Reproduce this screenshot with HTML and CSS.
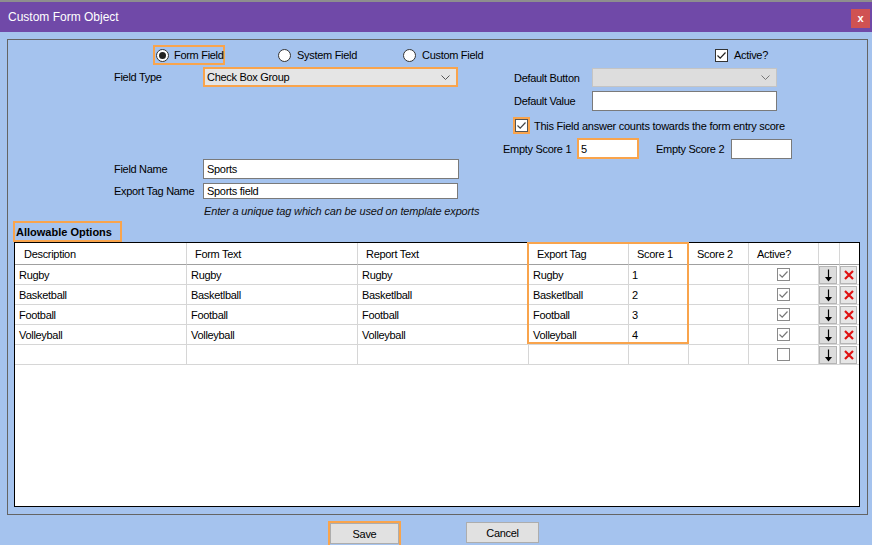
FILE: index.html
```html
<!DOCTYPE html>
<html>
<head>
<meta charset="utf-8">
<title>Custom Form Object</title>
<link rel="stylesheet" href="styles.css">
</head>
<body>
<div class="window">
  <div class="titlebar">
    <div class="title">Custom Form Object</div>
    <div class="close">x</div>
  </div>
  <div class="client">
    <div class="group">
      <div class="options-row">
        <div class="opt opt1">
          <span class="hl-box">
            <span class="radio checked"></span><span>Form Field</span>
          </span>
        </div>
        <div class="opt opt2"><span class="radio"></span><span>System Field</span></div>
        <div class="opt opt3"><span class="radio"></span><span>Custom Field</span></div>
        <div class="opt"><span class="check"><svg width="11" height="11" viewBox="0 0 11 11"><path d="M1.5 5.5 L4.2 8.2 L9.5 2.5" fill="none" stroke="#222" stroke-width="1.2"/></svg></span><span>Active?</span></div>
      </div>
      <div class="main">
        <div class="left">
          <div class="frow ft-row">
            <span class="lbl lbl-left">Field Type</span>
            <div class="select hl-select">
              <span>Check Box Group</span>
              <svg class="chev" width="9" height="5" viewBox="0 0 9 5"><path d="M0.5 0.5 L4.5 4.5 L8.5 0.5" fill="none" stroke="#555" stroke-width="1"/></svg>
            </div>
          </div>
          <div class="frow fn-row">
            <span class="lbl lbl-left">Field Name</span>
            <div class="tb tb-name">Sports</div>
          </div>
          <div class="frow et-row">
            <span class="lbl lbl-left">Export Tag Name</span>
            <div class="tb tb-tag">Sports field</div>
          </div>
          <div class="hint">Enter a unique tag which can be used on template exports</div>
        </div>
        <div class="right">
          <div class="frow db-row">
            <span class="lbl lbl-right">Default Button</span>
            <div class="select dis-select">
              <svg class="chev" width="9" height="5" viewBox="0 0 9 5"><path d="M0.5 0.5 L4.5 4.5 L8.5 0.5" fill="none" stroke="#777" stroke-width="1"/></svg>
            </div>
          </div>
          <div class="frow dv-row">
            <span class="lbl lbl-right">Default Value</span>
            <div class="tb tb-value"></div>
          </div>
          <div class="frow cb-row">
            <span class="hl-check"><span class="check"><svg width="11" height="11" viewBox="0 0 11 11"><path d="M1.5 5.5 L4.2 8.2 L9.5 2.5" fill="none" stroke="#444" stroke-width="1.2"/></svg></span></span>
            <span class="cb-text">This Field answer counts towards the form entry score</span>
          </div>
          <div class="frow es-row">
            <span class="lbl lbl-es1">Empty Score 1</span>
            <div class="tb tb-es1">5</div>
            <span class="lbl lbl-es2">Empty Score 2</span>
            <div class="tb tb-es2"></div>
          </div>
        </div>
      </div>
      <div class="allow-label">Allowable Options</div>
      <div class="table">
        <div class="grid">
          <div class="hc c1">Description</div>
          <div class="hc">Form Text</div>
          <div class="hc">Report Text</div>
          <div class="hc">Export Tag</div>
          <div class="hc">Score 1</div>
          <div class="hc">Score 2</div>
          <div class="hc">Active?</div>
          <div class="hc"></div>
          <div class="hc last"></div>

          <div class="dc">Rugby</div><div class="dc">Rugby</div><div class="dc">Rugby</div><div class="dc">Rugby</div><div class="dc sc">1</div><div class="dc"></div>
          <div class="dc ctr"><span class="gcheck"><svg width="11" height="11" viewBox="0 0 11 11"><path d="M1.5 5.5 L4.2 8.2 L9.5 2.5" fill="none" stroke="#777" stroke-width="1.2"/></svg></span></div>
          <div class="dc bc"><span class="btn-arrow"><svg width="9" height="13" viewBox="0 0 9 13"><path d="M4.5 0.5 V9" stroke="#000" stroke-width="1.2"/><path d="M1 8 H8 L4.5 12.5 Z" fill="#000"/></svg></span></div>
          <div class="dc bc last"><span class="btn-del"><svg width="10" height="10" viewBox="0 0 10 10"><path d="M1 1 L9 9 M9 1 L1 9" stroke="#e01010" stroke-width="2.2"/></svg></span></div>

          <div class="dc">Basketball</div><div class="dc">Basketlball</div><div class="dc">Basketlball</div><div class="dc">Basketlball</div><div class="dc sc">2</div><div class="dc"></div>
          <div class="dc ctr"><span class="gcheck"><svg width="11" height="11" viewBox="0 0 11 11"><path d="M1.5 5.5 L4.2 8.2 L9.5 2.5" fill="none" stroke="#777" stroke-width="1.2"/></svg></span></div>
          <div class="dc bc"><span class="btn-arrow"><svg width="9" height="13" viewBox="0 0 9 13"><path d="M4.5 0.5 V9" stroke="#000" stroke-width="1.2"/><path d="M1 8 H8 L4.5 12.5 Z" fill="#000"/></svg></span></div>
          <div class="dc bc last"><span class="btn-del"><svg width="10" height="10" viewBox="0 0 10 10"><path d="M1 1 L9 9 M9 1 L1 9" stroke="#e01010" stroke-width="2.2"/></svg></span></div>

          <div class="dc">Football</div><div class="dc">Football</div><div class="dc">Football</div><div class="dc">Football</div><div class="dc sc">3</div><div class="dc"></div>
          <div class="dc ctr"><span class="gcheck"><svg width="11" height="11" viewBox="0 0 11 11"><path d="M1.5 5.5 L4.2 8.2 L9.5 2.5" fill="none" stroke="#777" stroke-width="1.2"/></svg></span></div>
          <div class="dc bc"><span class="btn-arrow"><svg width="9" height="13" viewBox="0 0 9 13"><path d="M4.5 0.5 V9" stroke="#000" stroke-width="1.2"/><path d="M1 8 H8 L4.5 12.5 Z" fill="#000"/></svg></span></div>
          <div class="dc bc last"><span class="btn-del"><svg width="10" height="10" viewBox="0 0 10 10"><path d="M1 1 L9 9 M9 1 L1 9" stroke="#e01010" stroke-width="2.2"/></svg></span></div>

          <div class="dc">Volleyball</div><div class="dc">Volleyball</div><div class="dc">Volleyball</div><div class="dc">Volleyball</div><div class="dc sc">4</div><div class="dc"></div>
          <div class="dc ctr"><span class="gcheck"><svg width="11" height="11" viewBox="0 0 11 11"><path d="M1.5 5.5 L4.2 8.2 L9.5 2.5" fill="none" stroke="#777" stroke-width="1.2"/></svg></span></div>
          <div class="dc bc"><span class="btn-arrow"><svg width="9" height="13" viewBox="0 0 9 13"><path d="M4.5 0.5 V9" stroke="#000" stroke-width="1.2"/><path d="M1 8 H8 L4.5 12.5 Z" fill="#000"/></svg></span></div>
          <div class="dc bc last"><span class="btn-del"><svg width="10" height="10" viewBox="0 0 10 10"><path d="M1 1 L9 9 M9 1 L1 9" stroke="#e01010" stroke-width="2.2"/></svg></span></div>

          <div class="dc"></div><div class="dc"></div><div class="dc"></div><div class="dc"></div><div class="dc sc"></div><div class="dc"></div>
          <div class="dc ctr"><span class="gcheck"></span></div>
          <div class="dc bc"><span class="btn-arrow"><svg width="9" height="13" viewBox="0 0 9 13"><path d="M4.5 0.5 V9" stroke="#000" stroke-width="1.2"/><path d="M1 8 H8 L4.5 12.5 Z" fill="#000"/></svg></span></div>
          <div class="dc bc last"><span class="btn-del"><svg width="10" height="10" viewBox="0 0 10 10"><path d="M1 1 L9 9 M9 1 L1 9" stroke="#e01010" stroke-width="2.2"/></svg></span></div>
        </div>
        <div class="focus-box"></div>
      </div>
    </div>
    <div class="buttons">
      <div class="hl-btn"><div class="btn">Save</div></div>
      <div class="btn btn-cancel">Cancel</div>
    </div>
  </div>
</div>
</body>
</html>
```

FILE: styles.css
```css
* { box-sizing: border-box; }
html, body { margin: 0; padding: 0; }
body {
  width: 872px; height: 545px; overflow: hidden;
  background: #a5c3ee;
  font-family: "Liberation Sans", Arial, sans-serif;
  font-size: 11px; letter-spacing: -0.3px; color: #000;
}
.window { width: 872px; height: 545px; display: flex; flex-direction: column; }
.titlebar {
  height: 32px; flex: none;
  border-top: 2px solid #8e8e8e;
  background: #7049a8;
  display: flex; align-items: flex-start; justify-content: space-between;
}
.title { color: #fff; font-size: 12px; letter-spacing: 0; line-height: 14px; margin: 8px 0 0 8px; }
.close {
  width: 19px; height: 19px; margin: 7px 2px 0 0;
  background: #d05252; color: #fff; font-weight: bold; font-size: 11px; letter-spacing: 0;
  display: flex; align-items: center; justify-content: center; padding-bottom: 2px;
}
.client { padding: 7px 0 0 7px; }
.group { width: 861px; height: 476px; border: 1px solid #646464; }

/* top radio row */
.options-row { display: flex; align-items: center; height: 20px; margin-top: 5px; }
.opt { display: flex; align-items: center; gap: 6px; }
.opt1 { margin-left: 145px; width: 125px; }
.opt2 { width: 125px; }
.opt3 { width: 312px; }
.hl-box { display: flex; align-items: center; gap: 5px; width: 72px; height: 20px; border: 2px solid #f9a44c; padding: 0 0 0 1px; white-space: nowrap; }
.radio {
  width: 13px; height: 13px; border-radius: 50%; border: 1px solid #333; background: #fff;
  display: inline-flex; align-items: center; justify-content: center; flex: none;
}
.radio.checked::after { content: ""; width: 7px; height: 7px; border-radius: 50%; background: #222; }
.check {
  width: 13px; height: 13px; border: 1px solid #333; background: #fff; flex: none;
  display: inline-flex; align-items: center; justify-content: center;
}

/* main area */
.main { display: flex; height: 156px; }
.left { width: 492px; }
.right { flex: 1; }
.frow { display: flex; align-items: center; }
.lbl-left { width: 195px; padding-left: 106px; flex: none; }
.ft-row { margin-top: 2px; height: 20px; }
.fn-row { margin-top: 72px; height: 20px; }
.et-row { margin-top: 4px; height: 16px; }
.select {
  height: 20px; display: flex; align-items: center; justify-content: space-between;
  background: #e5e5e5; padding: 0 6px 0 2px;
}
.hl-select { width: 255px; border: 2px solid #f9a44c; }
.dis-select { width: 185px; height: 19px; border: 1px solid #c4c4c4; background: #dddddd; justify-content: flex-end; }
.chev { flex: none; }
.tb { background: #fff; border: 1px solid #7a7a7a; height: 20px; display: flex; align-items: center; padding-left: 3px; }
.tb-name { width: 256px; }
.tb-tag { width: 255px; height: 16px; }
.hint { font-style: italic; margin: 5px 0 0 196px; height: 14px; line-height: 14px; color: #111; letter-spacing: -0.15px; }

.db-row { margin-top: 3px; height: 19px; padding-left: 14px; }
.lbl-right { width: 78px; flex: none; }
.dv-row { margin-top: 4px; height: 20px; padding-left: 14px; }
.tb-value { width: 185px; border-color: #7a7a7a; }
.cb-row { margin-top: 6px; height: 17px; padding-left: 13px; gap: 4px; }
.cb-text { letter-spacing: -0.25px; }
.hl-check { width: 17px; height: 17px; border: 2px solid #f9a44c; display: inline-flex; flex: none; }
.hl-check .check { border-color: #555; }
.es-row { margin-top: 4px; height: 21px; padding-left: 3px; }
.lbl-es1 { width: 74px; flex: none; }
.tb-es1 { width: 62px; height: 21px; border: 2px solid #f9a44c; padding-left: 2px; }
.lbl-es2 { width: 75px; margin-left: 17px; flex: none; }
.tb-es2 { width: 61px; }

/* allowable options */
.allow-label {
  margin-left: 5px; width: 109px; height: 21px;
  border: 2px solid #f9a44c; font-weight: bold; letter-spacing: 0;
  display: flex; align-items: center; padding-left: 1px;
}
.table {
  position: relative; margin-left: 6px; width: 846px; height: 265px;
  border: 1px solid #000; background: #fff;
}
.grid {
  display: grid;
  grid-template-columns: 172px 171px 171px 100px 60px 60px 70px 21px 19px;
  grid-template-rows: 22px;
  grid-auto-rows: 20px;
}
.hc, .dc { border-right: 1px solid #d6d6d6; border-bottom: 1px solid #d6d6d6; display: flex; align-items: center; white-space: nowrap; }
.hc { border-bottom-color: #a0a0a0; padding-left: 8px; }
.hc.c1 { padding-left: 9px; }
.dc { padding-left: 4px; }
.dc.sc { padding-left: 3px; }
.last { border-right: none; }
.ctr { justify-content: center; padding-left: 0; }
.bc { padding-left: 0; align-items: flex-start; }
.gcheck {
  width: 13px; height: 13px; border: 1px solid #8a8a8a; background: #fff;
  display: inline-flex; align-items: center; justify-content: center;
}
.btn-arrow, .btn-del {
  margin-top: 1px; height: 18px; background: #dcdcdc; border: 1px solid #b5b5b5;
  display: inline-flex; align-items: center; justify-content: center;
}
.btn-arrow { width: 18px; }
.btn-del { width: 17px; background: #e6e6e6; }
.focus-box {
  position: absolute; left: 512px; top: -1px; width: 162px; height: 102px;
  border: 2px solid #f9a44c; pointer-events: none;
}

/* bottom buttons */
.buttons { display: flex; align-items: flex-start; margin-top: 6px; }
.hl-btn { margin-left: 321px; width: 73px; height: 26px; border: 2px solid #f9a44c; }
.btn {
  height: 100%; background: #e1e1e1; border: 1px solid #adadad;
  display: flex; align-items: center; justify-content: center; font-size: 11px;
}
.hl-btn .btn { height: 21px; }
.btn-cancel { margin-left: 65px; margin-top: 1px; width: 73px; height: 21px; }
```
